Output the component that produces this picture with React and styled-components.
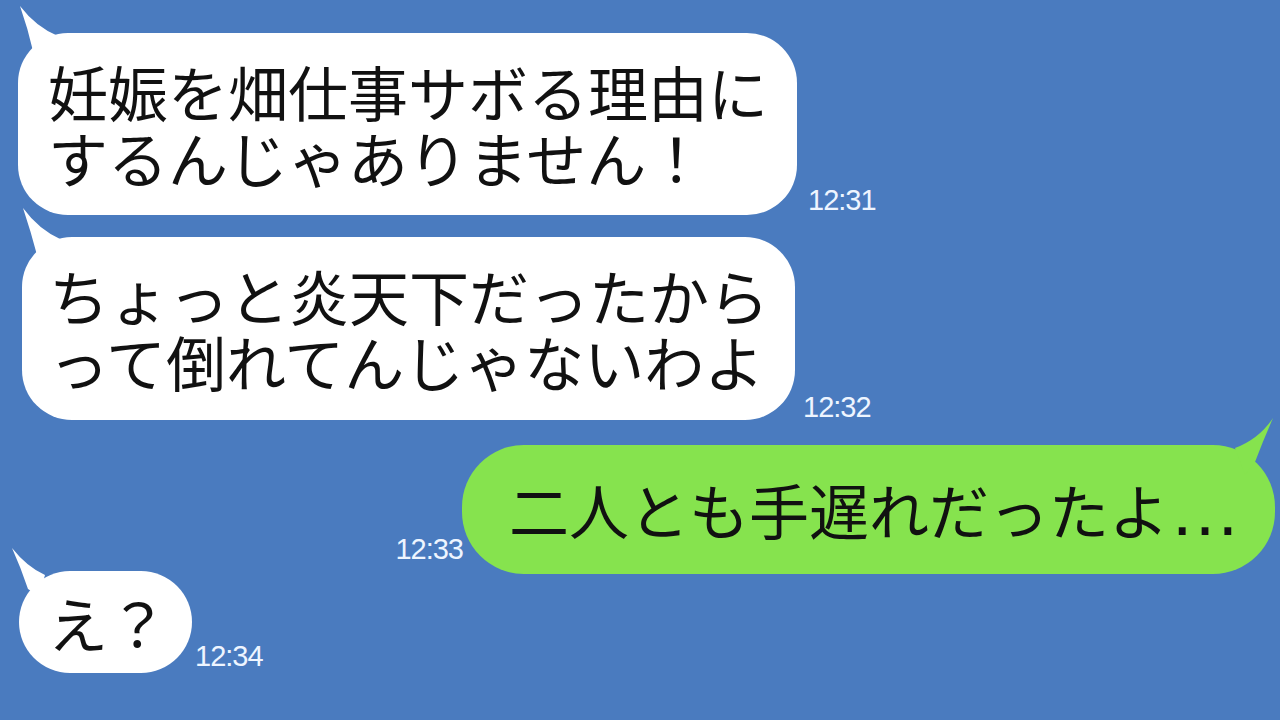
import React from "react";
import styled, { createGlobalStyle } from "styled-components";

const Global = createGlobalStyle`
  html, body { margin: 0; padding: 0; background: #4a7bbf; }
  #root { width: 1280px; height: 720px; }
`;

const Page = styled.div`
  width: 1280px;
  height: 720px;
  box-sizing: border-box;
  padding-top: 33px;
  background: #4a7bbf;
  display: flex;
  flex-direction: column;
  overflow: hidden;
`;

const Row = styled.div`
  display: flex;
  align-items: flex-end;
  justify-content: ${(p) => (p.$end ? "flex-end" : "flex-start")};
  margin-top: ${(p) => p.$mt || 0}px;
  padding-left: ${(p) => p.$pl || 0}px;
  padding-right: ${(p) => p.$pr || 0}px;
`;

const Bubble = styled.div`
  position: relative;
  background: ${(p) => (p.$green ? "#86e34e" : "#ffffff")};
  border-radius: ${(p) => p.$radius}px;
  padding: ${(p) => p.$pad};
  font-family: "Noto Sans CJK JP", "Noto Sans CJK SC", sans-serif;
  font-size: 60px;
  line-height: 66px;
  font-weight: 400;
  color: #111111;
  white-space: nowrap;
`;

const TailSvg = styled.svg`
  position: absolute;
  top: -40px;
  ${(p) => (p.$right ? "right: -20px; transform: scaleX(-1);" : "left: -20px;")}
  width: 100px;
  height: 100px;
  overflow: visible;
  pointer-events: none;
`;

const Ellipsis = styled.span`
  font-family: "Liberation Sans", Arial, sans-serif;
  font-size: 72px;
`;

const Time = styled.span`
  font-family: "Liberation Sans", Arial, sans-serif;
  font-size: 29px;
  line-height: 1;
  letter-spacing: -1px;
  color: #eef5ff;
  white-space: nowrap;
  margin-bottom: ${(p) => p.$mb || 0}px;
  margin-left: ${(p) => p.$ml || 0}px;
  margin-right: ${(p) => p.$mr || 0}px;
`;

const Tail = ({ d, right, color }) => (
  <TailSvg $right={right} viewBox="-20 -40 100 100">
    <path d={d} fill={color} />
  </TailSvg>
);

export default function App() {
  return (
    <>
      <Global />
      <Page>
        <Row $pl={18}>
          <Bubble $radius={50} $pad="25px 29px 25px 30px">
            <Tail color="#ffffff" d="M2 -27 Q18 -6 40 3 L30 30 L15 18 Q10 -4 2 -27 Z" />
            妊娠を畑仕事サボる理由に
            <br />
            するんじゃありません！
          </Bubble>
          <Time $ml={11} $mb={0}>12:31</Time>
        </Row>
        <Row $pl={22} $mt={22}>
          <Bubble $radius={50} $pad="25px 26px 26px 27px">
            <Tail color="#ffffff" d="M1 -29 Q17 -7 40 3 L30 30 L15 18 Q9 -5 1 -29 Z" />
            ちょっと炎天下だったから
            <br />
            って倒れてんじゃないわよ
          </Bubble>
          <Time $ml={8} $mb={-2}>12:32</Time>
        </Row>
        <Row $end $pr={5} $mt={25}>
          <Time $mr={-1} $mb={10}>12:33</Time>
          <Bubble $green $radius={62} $pad="31px 34px 31px 47px">
            <Tail right color="#86e34e" d="M2 -27 Q16 -6 40 3 L30 30 L20 17 Q12 -4 2 -27 Z" />
            二人とも手遅れだったよ<Ellipsis>…</Ellipsis>
          </Bubble>
        </Row>
        <Row $pl={19} $mt={-3}>
          <Bubble $radius={51} $pad="18px 24px 18px 29px">
            <Tail color="#ffffff" d="M-7 -23 Q8 -4 26 4 L20 25 L9 18 Q2 -3 -7 -23 Z" />
            え？
          </Bubble>
          <Time $ml={3} $mb={2}>12:34</Time>
        </Row>
      </Page>
    </>
  );
}
